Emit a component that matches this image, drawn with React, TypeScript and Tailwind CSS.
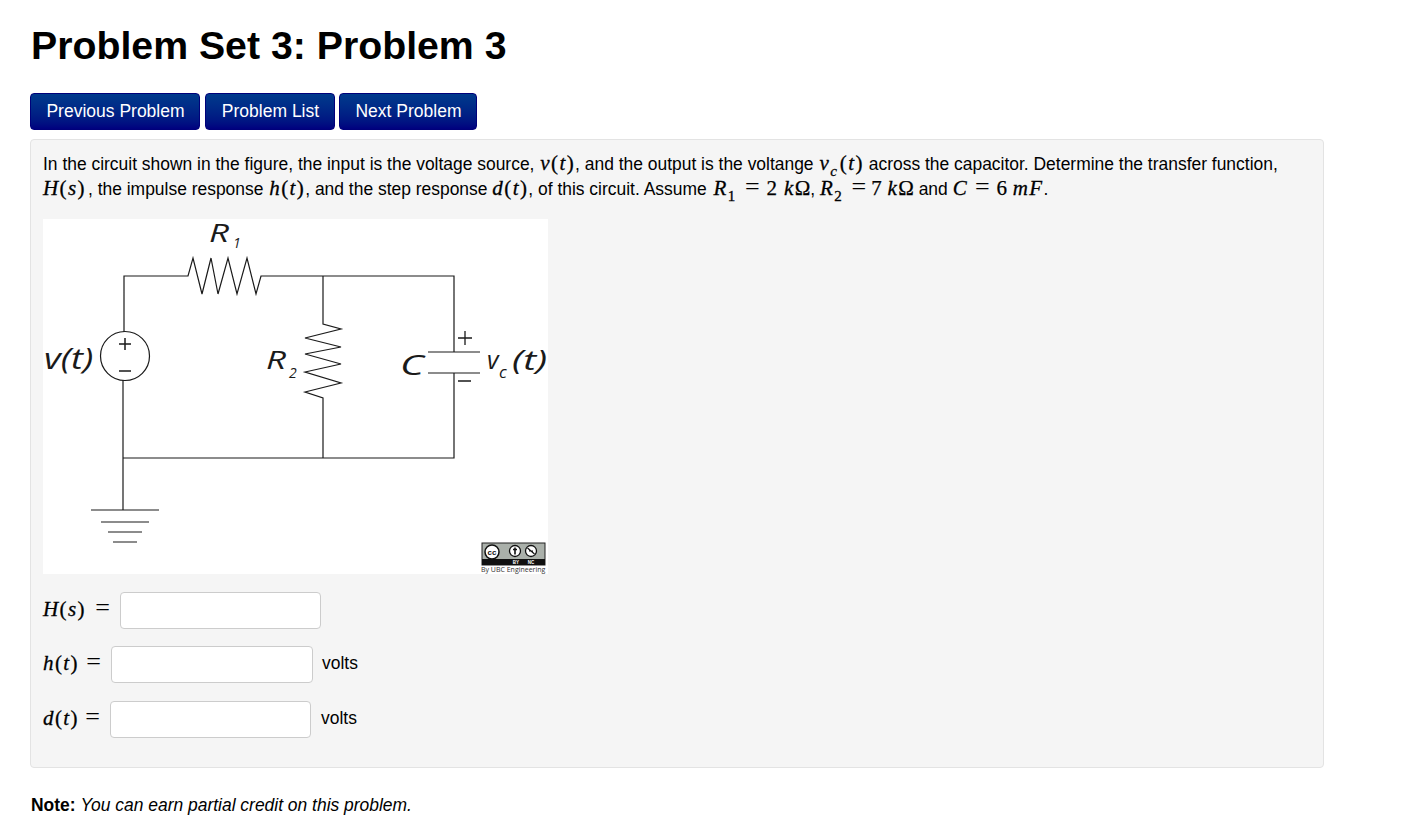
const mathClass = "font-['Liberation_Serif',serif] italic text-[21px] leading-none tracking-[1.4px] [-webkit-text-stroke:0.3px_#000]";
const uprightClass = "font-['Liberation_Serif',serif] not-italic text-[21px] leading-none [-webkit-text-stroke:0.25px_#000]";
const equalsClass = "font-['Liberation_Serif',serif] text-[26px] leading-none [-webkit-text-stroke:0.1px_#000]";

function Fn({ name, arg, className = '' }: { name: string; arg: string; className?: string }) {
	return (
		<span className={`${mathClass} ${className}`}>
			{name}<span className="not-italic">(</span>{arg}<span className="not-italic">)</span>
		</span>
	);
}

function M({ children, className = '' }: { children: React.ReactNode; className?: string }) {
	return <span className={`${mathClass} ${className}`}>{children}</span>;
}

function N({ children, className = '' }: { children: React.ReactNode; className?: string }) {
	return <span className={`${uprightClass} ${className}`}>{children}</span>;
}

function Eq({ className = '' }: { className?: string }) {
	return <span className={`${equalsClass} ${className}`}>=</span>;
}

function Sub({ children, italic }: { children: React.ReactNode; italic?: boolean }) {
	return (
		<sub className={`font-['Liberation_Serif',serif] text-[15px] align-[-2px] leading-none tracking-normal ${italic ? 'italic mr-[3px]' : 'not-italic mr-px'}`}>
			{children}
		</sub>
	);
}

function NavButton({ label, width }: { label: string; width: string }) {
	return (
		<button className={`${width} h-[37px] pl-px rounded-[4px] border border-[#00007a] bg-gradient-to-b from-[#003a8c] to-[#00007f] text-white text-[17.5px] leading-none`}>
			{label}
		</button>
	);
}

function CircuitFigure() {
	const wire = "#1a1a1a";
	const label = { fontFamily: "'Open Sans', sans-serif", fill: '#1a1a1a' };
	return (
		<svg width="505" height="355" viewBox="43 219 505 355" className="block bg-white overflow-visible">
			<g fill="none" stroke={wire} strokeWidth="1.2">
				<path d="M124 332V276H188L193 258L202 294L211 258L218 294L228 258L237 294L247 258L256 294L261 276H454V352" />
				<path d="M323 276V324L341 329L305 338L341 347L305 354L341 364L305 372L341 383L305 392L323 398V458" />
				<circle cx="125" cy="356" r="24.500" />
				<path d="M123 380V510" />
				<path d="M123 458H454V373" />
				<path d="M428 352H480M428 373H480" />
				<path d="M91 510H159M101 522H149M108 532H142M113 542H137" />
				<path d="M119 344H131M125 338V350M119 371H131" strokeWidth="1.500" />
				<path d="M458 338H472M465 331V345M458 381H471" strokeWidth="1.300" />
			</g>
			<g style={label}>
				<text transform="translate(209 242) scale(1.4 1)" fontSize="25" fontStyle="italic">R</text>
				<text x="233" y="248" fontSize="14" fontStyle="italic">1</text>
				<text transform="translate(44 369) scale(1.25 1)" fontSize="29" fontStyle="italic">v(t)</text>
				<text transform="translate(266 369) scale(1.4 1)" fontSize="25" fontStyle="italic">R</text>
				<text x="289" y="378" fontSize="14" fontStyle="italic">2</text>
				<text transform="translate(400 375) scale(1.45 1)" fontSize="28" fontStyle="italic">C</text>
				<text x="487" y="369" fontSize="25" fontStyle="italic">v</text>
				<text x="499" y="378" fontSize="17" fontStyle="italic">c</text>
				<text transform="translate(512 370) scale(1.4 1)" fontSize="28" fontStyle="italic">(t)</text>
			</g>
			<g>
				<rect x="482" y="543" width="63" height="22" fill="#aab0aa" stroke="#222" strokeWidth="1" />
				<rect x="482" y="559" width="63" height="6" fill="#111" />
				<circle cx="492" cy="552" r="7" fill="#fff" stroke="#111" strokeWidth="1.500" />
				<text x="492" y="555" fontSize="8" fontWeight="700" textAnchor="middle" fontFamily="'Liberation Sans', sans-serif" fill="#111">cc</text>
				<circle cx="515" cy="551" r="5.500" fill="#fff" stroke="#111" strokeWidth="1.300" />
				<path d="M515 547.500V554.500M513 549.500H517" stroke="#111" strokeWidth="1.600" fill="none" />
				<circle cx="531" cy="551" r="5.500" fill="#fff" stroke="#111" strokeWidth="1.300" />
				<path d="M527.500 548L534.500 554M529 551H533" stroke="#111" strokeWidth="1.200" fill="none" />
				<text x="516" y="564" fontSize="4.500" fontWeight="700" textAnchor="middle" fill="#fff" fontFamily="'Liberation Sans', sans-serif">BY</text>
				<text x="531" y="564" fontSize="4.500" fontWeight="700" textAnchor="middle" fill="#fff" fontFamily="'Liberation Sans', sans-serif">NC</text>
				<text x="481" y="572" fontSize="7" fill="#333" fontFamily="'Open Sans', sans-serif">By UBC Engineering</text>
			</g>
		</svg>
	);
}

type AnswerRowProps = {
	name: string;
	arg: string;
	labelWidth: string;
	inputWidth: string;
	unit?: string;
	unitGap?: string;
	className: string;
};

function AnswerRow({ name, arg, labelWidth, inputWidth, unit, unitGap, className }: AnswerRowProps) {
	return (
		<div className={`flex items-center h-[37px] ${className}`}>
			<span className={`${labelWidth} flex justify-between items-baseline pr-[10px] pb-[5px]`}>
				<Fn name={name} arg={arg} />
				<Eq />
			</span>
			<input type="text" className={`${inputWidth} h-[37px] bg-white border border-[#ccc] rounded-[4px]`} />
			{unit && <span className={`${unitGap} pb-[2px]`}>{unit}</span>}
		</div>
	);
}

export default function App() {
	return (
		<div className="px-[30px] font-['Liberation_Sans',sans-serif] text-[17.45px] text-black bg-white min-h-[832px]">
			<h1 className="pt-[20px] pl-px text-[39.25px] leading-[50px] font-bold">Problem Set 3: Problem 3</h1>
			<div className="flex mt-[23px]">
				<NavButton label="Previous Problem" width="w-[170px]" />
				<div className="ml-[5px]"><NavButton label="Problem List" width="w-[130px]" /></div>
				<div className="ml-[4px]"><NavButton label="Next Problem" width="w-[138px]" /></div>
			</div>
			<div className="mt-[9px] w-[1294px] h-[629px] bg-[#f5f5f5] border border-[#e3e3e3] rounded-[4px] pt-[12px] px-[12px]">
				<p className="leading-[25px] w-[1260px] [&>span]:leading-[0] [&_sub]:leading-[0]">
					In the circuit shown in the figure, the input is the voltage source, <Fn name="v" arg="t" className="ml-px" />, and the output is the voltange <M className="ml-px">v<Sub italic>c</Sub><span className="not-italic">(</span>t<span className="not-italic">)</span></M> across the capacitor. Determine the transfer function, <Fn name="H" arg="s" className="mr-[2px]" />, the impulse response <Fn name="h" arg="t" className="ml-px" />, and the step response <Fn name="d" arg="t" />, of this circuit. Assume <M className="ml-[2px]">R<Sub>1</Sub></M> <Eq className="ml-[4px]" /> <N className="ml-[2px]">2</N> <M className="ml-[2px]">k</M><N>Ω</N>, <M>R<Sub>2</Sub></M> <Eq className="ml-[4px]" /> <N>7</N> <M className="ml-px">k</M><N>Ω</N> and <M>C</M> <Eq className="ml-[2px]" /> <N className="ml-[2px]">6</N> <M className="ml-px">mF</M>.
				</p>
				<div className="mt-[17px]"><CircuitFigure /></div>
				<AnswerRow name="H" arg="s" labelWidth="w-[77px]" inputWidth="w-[201px]" className="mt-[18px]" />
				<AnswerRow name="h" arg="t" labelWidth="w-[68px]" inputWidth="w-[202px]" unit="volts" unitGap="ml-[9px]" className="mt-[17px]" />
				<AnswerRow name="d" arg="t" labelWidth="w-[67px]" inputWidth="w-[201px]" unit="volts" unitGap="ml-[10px]" className="mt-[18px]" />
			</div>
			<p className="mt-[24px] pl-px"><b>Note:</b> <i>You can earn partial credit on this problem.</i></p>
		</div>
	);
}
